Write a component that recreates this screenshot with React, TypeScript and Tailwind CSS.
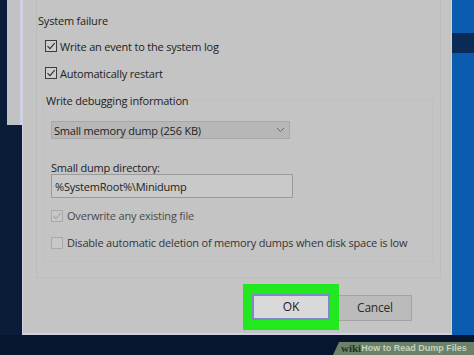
import React from "react";

const font = { fontFamily: '"Open Sans", "Noto Sans", sans-serif' };

function Check({ checked, disabled }: { checked?: boolean; disabled?: boolean }) {
  return (
    <div
      className={
        "shrink-0 w-[12px] h-[12px] flex items-center justify-center border " +
        (disabled ? "border-[#a9a9a9] bg-[#c7c7c7]" : "border-[#3c3c3c] bg-[#cdcdcd]")
      }
    >
      {checked && (
        <svg width="10" height="10" viewBox="0 0 10 10">
          <path
            d="M1.5 5.2 L4 7.7 L8.7 2.2"
            fill="none"
            stroke={disabled ? "#a5a5a5" : "#2e2e2e"}
            strokeWidth="1.1"
          />
        </svg>
      )}
    </div>
  );
}

export default function App() {
  return (
    <div
      className="relative w-[474px] h-[355px] overflow-hidden bg-[#07162e] flex flex-col"
      style={font}
    >
      <div className="flex h-[335px] w-[474px] bg-[#0b5cae]">
        {/* left desktop strip with window behind */}
        <div className="w-[22px] shrink-0 flex flex-col bg-[#0b1c38]">
          <div className="ml-[7px] h-[125px] bg-[#c2c2c5] border-r-2 border-[#cfd1e2]" />
        </div>
        {/* dialog */}
        <div className="w-[430px] shrink-0 h-[335px] bg-[#c4c4c4] border-l border-r border-b-2 border-[#cdd1e2] flex flex-col text-[#222222] text-[11px] leading-none tracking-[-0.2px] whitespace-nowrap">
          <div className="ml-[13px] mr-[10px] h-[278px] border-l border-r border-b border-[#bcbcbc] flex flex-col">
            <div className="pl-[1px] mt-[14px] h-[12px] flex items-center">System failure</div>
            <div className="flex items-center gap-[3px] h-[12px] ml-[8px] mt-[14px]">
              <Check checked />
              <span>Write an event to the system log</span>
            </div>
            <div className="flex items-center gap-[3px] h-[12px] ml-[8px] mt-[15px]">
              <Check checked />
              <span>Automatically restart</span>
            </div>
            {/* debugging group */}
            <div className="ml-[6px] mr-[7px] mt-[21px] h-[162px] border border-[#bfbfbf] flex flex-col">
              <div className="-mt-[7px] h-[12px] flex items-center">
                <span className="bg-[#c4c4c4] pl-[2px] pr-[3px]">Write debugging information</span>
              </div>
              <div className="ml-[7px] mt-[15px] w-[239px] h-[18px] bg-[#b7b7b7] border border-[#a8a8a8] flex items-center justify-between pl-[2px] pr-[4px]">
                <span>Small memory dump (256 KB)</span>
                <svg width="9" height="6" viewBox="0 0 9 6">
                  <path d="M1 1 L4.5 4.5 L8 1" fill="none" stroke="#6a6a6a" strokeWidth="1" />
                </svg>
              </div>
              <div className="ml-[7px] mt-[22px] h-[12px] flex items-center">Small dump directory:</div>
              <div className="ml-[7px] mt-[1px] w-[242px] h-[24px] bg-[#c9c9c9] border border-[#9b9b9b] flex items-center pl-[3px]">
                %SystemRoot%\Minidump
              </div>
              <div className="flex items-center gap-[4px] h-[11px] ml-[7px] mt-[12px] text-[#4a4a4a]">
                <Check checked disabled />
                <span>Overwrite any existing file</span>
              </div>
              <div className="flex items-center gap-[4px] h-[11px] ml-[7px] mt-[16px] text-[#353535]">
                <Check disabled />
                <span>Disable automatic deletion of memory dumps when disk space is low</span>
              </div>
            </div>
          </div>
          {/* buttons */}
          <div className="flex ml-[220px] mt-[6px]">
            <div className="w-[96px] h-[46px] bg-[#22e81f] flex items-center justify-center">
              <div className="w-[78px] h-[26px] bg-[#d9d9d9] border-2 border-[#7f89c6] flex items-center justify-center text-[#222] text-[12px]">
                OK
              </div>
            </div>
            <div className="mt-[11px] w-[73px] h-[26px] bg-[#bbbbbb] border border-[#a3a3a3] border-l-0 flex items-center justify-center text-[#2a2a2a] text-[12px]">
              Cancel
            </div>
          </div>
        </div>
        {/* right desktop strip */}
        <div className="flex-1 h-[335px] flex flex-col bg-[#0b5cae]">
          <div className="mt-[33px] h-[20px] bg-[#0a2b56]" />
        </div>
      </div>
      <div className="flex-1 bg-[#07162e]" />
      {/* watermark */}
      <div
        className="absolute right-0 bottom-0 h-[13px] w-[141px] bg-[#6c8167] flex items-center pl-[8px] leading-none font-bold whitespace-nowrap"
        style={{ clipPath: "polygon(6px 0, 100% 0, 100% 100%, 0 100%)" }}
      >
        <span className="text-[#233325] text-[11px]" style={{ fontFamily: '"Liberation Serif", serif' }}>wiki</span>
        <span className="text-[#c4d3be] text-[9px]" style={{ fontFamily: '"Liberation Sans", sans-serif' }}>How to Read Dump Files</span>
      </div>
    </div>
  );
}
